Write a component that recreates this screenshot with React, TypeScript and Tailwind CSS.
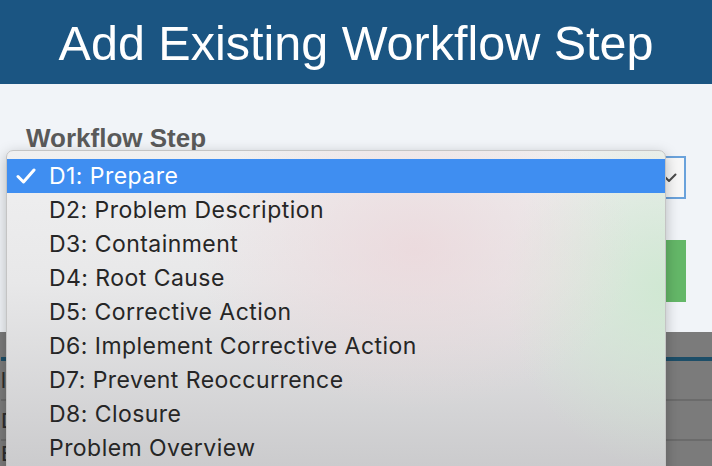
import React from "react";

const steps = [
	"D1: Prepare",
	"D2: Problem Description",
	"D3: Containment",
	"D4: Root Cause",
	"D5: Corrective Action",
	"D6: Implement Corrective Action",
	"D7: Prevent Reoccurrence",
	"D8: Closure",
	"Problem Overview",
];

const CheckMark = () => (
	<svg width="20" height="16" viewBox="0 0 20 16" className="shrink-0">
		<path
			d="M2 8.5 L7.5 14 L18 2"
			fill="none"
			stroke="white"
			strokeWidth="3"
			strokeLinecap="round"
			strokeLinejoin="round"
		/>
	</svg>
);

const StepMenu: React.FC<{ selected: number }> = ({ selected }) => (
	<div
		className="absolute left-[6px] top-[150px] w-[660px] h-[330px] pt-[8px] rounded-t-[7px] border border-[#c4c4c4] shadow-[0_4px_14px_rgba(0,0,0,0.25)] overflow-hidden
    bg-[radial-gradient(ellipse_220px_160px_at_62%_30%,rgba(236,212,216,0.7),transparent),radial-gradient(ellipse_160px_180px_at_100%_42%,rgba(205,232,208,0.9),transparent),linear-gradient(to_bottom,#f0f0f1_0%,#e8e8e9_40%,#c9c9cb_100%)]"
		style={{ fontFamily: "Inter, 'Noto Sans', sans-serif" }}
	>
		{steps.map((s, i) => (
			<div
				key={s}
				className={`flex items-center h-[34px] text-[23px] leading-[34px] tracking-[0.45px] ${
					i === selected ? "bg-[#3f8ef1] text-white" : "text-[#262626]"
				}`}
			>
				<div className="w-[42px] pl-[9px] flex items-center">
					{i === selected && <CheckMark />}
				</div>
				<span>{s}</span>
			</div>
		))}
	</div>
);

export default function App() {
	return (
		<div
			className="relative w-[712px] h-[466px] overflow-hidden bg-[#7b7b7b]"
			style={{ fontFamily: "'Liberation Sans', Arial, sans-serif" }}
		>
			{/* MODAL */}
			<div className="bg-[#f1f4f8]">
				<div className="h-[84px] bg-[#1b5582] flex items-center justify-center">
					<h1 className="text-white text-[48.5px] leading-none pt-[2px]">
						Add Existing Workflow Step
					</h1>
				</div>
				<div className="px-[26px] pt-[41px] pb-[30px]">
					<label className="block text-[26px] leading-[26px] font-bold text-[#5a5a5a]">
						Workflow Step
					</label>
					<div className="mt-[5px] h-[43px] border-2 border-[#6aa2db] bg-[#f7f7f7] flex items-center justify-end pr-[7px]">
						<svg width="16" height="10" viewBox="0 0 16 10">
							<path
								d="M1.5 1.5 L8 8 L14.5 1.5"
								fill="none"
								stroke="#4a4a4a"
								strokeWidth="2"
								strokeLinecap="round"
								strokeLinejoin="round"
							/>
						</svg>
					</div>
					<button className="mt-[41px] w-full h-[62px] bg-[#64b768] text-white text-[22px]">
						Add
					</button>
				</div>
			</div>

			{/* DIMMED PAGE BEHIND */}
			<div className="text-[#2c2c2c] text-[22px] pl-[1px]">
				<div className="h-[25px]" />
				<div className="h-[4px] bg-[#1d4e68]" />
				<div className="h-[40px] flex items-center border-b-2 border-[#6b6b6b]">
					<span>l</span>
				</div>
				<div className="h-[40px] flex items-center border-b-2 border-[#6b6b6b]">
					<span>D</span>
				</div>
				<div className="h-[25px] flex items-center leading-[22px]">
					<span>E</span>
				</div>
			</div>

			<StepMenu selected={0} />
		</div>
	);
}
